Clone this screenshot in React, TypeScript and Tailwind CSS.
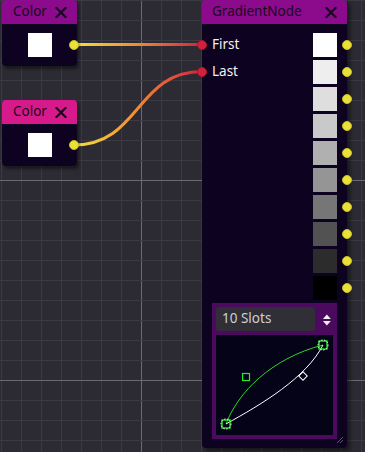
import React from "react";

const SWATCHES = [
  "#ffffff",
  "#eeeeee",
  "#dedede",
  "#c9c9c9",
  "#b0b0b0",
  "#959595",
  "#767676",
  "#525252",
  "#2c2c2c",
  "#000000",
];

const LABELS = ["First", "Last"];

function CloseIcon() {
  return (
    <svg width="12" height="11" viewBox="0 0 12 11" className="shrink-0">
      <path d="M1.5 1 L10.5 10 M10.5 1 L1.5 10" stroke="#16081c" strokeWidth="2.2" strokeLinecap="square" />
    </svg>
  );
}

function Port({ side, color }: { side: "left" | "right" | "inset"; color: "yellow" | "red" }) {
  const pos = side === "left" ? "left-[-5px]" : side === "right" ? "right-[-5px]" : "right-[-2px]";
  const fill = color === "yellow" ? "bg-[#e9e03a] border-[#c9bf22]" : "bg-[#d3203d] border-[#b01530]";
  return <span className={`absolute top-1/2 -translate-y-1/2 ${pos} h-[10px] w-[10px] rounded-full border ${fill}`} />;
}

function Grid() {
  const xs = Array.from({ length: 19 }, (_, i) => 1 + i * 20);
  const ys = Array.from({ length: 23 }, (_, i) => i * 20);
  return (
    <svg className="absolute inset-0" width="365" height="452">
      {xs.map((x) => (
        <line key={`x${x}`} x1={x + 0.5} y1="0" x2={x + 0.5} y2="452" stroke={x === 141 ? "#6b6a71" : "#3b3a43"} strokeWidth="1" />
      ))}
      {ys.map((y) => (
        <line key={`y${y}`} x1="0" y1={y + 0.5} x2="365" y2={y + 0.5} stroke={y === 180 || y === 380 ? "#6b6a71" : "#3b3a43"} strokeWidth="1" />
      ))}
    </svg>
  );
}

function Wires() {
  return (
    <svg className="absolute inset-0" width="365" height="452">
      <defs>
        <linearGradient id="w1" gradientUnits="userSpaceOnUse" x1="74" y1="0" x2="202" y2="0">
          <stop offset="0" stopColor="#f4e33c" />
          <stop offset="0.5" stopColor="#ee8a34" />
          <stop offset="1" stopColor="#d7203e" />
        </linearGradient>
      </defs>
      <path d="M74 44.5 L202 44.5" stroke="url(#w1)" strokeWidth="3" fill="none" />
      <path d="M74 145 C140 145 136 71.5 202 71.5" stroke="url(#w1)" strokeWidth="3" fill="none" />
    </svg>
  );
}

function ColorNode({ top, header }: { top: string; header: string }) {
  return (
    <div className={`absolute left-[2px] ${top} w-[75px] rounded-[4px] shadow-[2px_3px_3px_rgba(0,0,0,0.45)]`}>
      <div className={`flex h-[24px] items-center justify-between rounded-t-[4px] ${header} pl-[11px] pr-[10px] text-[13.5px] text-[#16081c]`}>
        <span>Color</span>
        <CloseIcon />
      </div>
      <div className="relative flex h-[42px] items-center justify-center rounded-b-[4px] bg-[#0d0220]">
        <div className="h-[24px] w-[24px] bg-white" />
        <Port side="inset" color="yellow" />
      </div>
    </div>
  );
}

function CurveEditor() {
  return (
    <svg width="117" height="100" className="block">
      <rect width="117" height="100" fill="#050317" />
      <g transform="translate(-216 -335)">
        <path d="M226 424 C238 392 272 358 323 345" stroke="#22dd22" strokeWidth="1" fill="none" />
        <path d="M226 424 C262 404 306 378 323 345" stroke="#ffffff" strokeWidth="1" fill="none" />
        <rect x="242.5" y="373.5" width="7" height="7" stroke="#22ee22" strokeWidth="1.2" fill="none" />
        <rect x="300" y="373" width="6" height="6" transform="rotate(45 303 376)" stroke="#ffffff" strokeWidth="1" fill="none" />
        <rect x="222" y="420" width="8" height="8" stroke="#22ee22" strokeWidth="1.4" fill="none" />
        <circle cx="226" cy="424" r="5" stroke="#ffffff" strokeWidth="1" strokeDasharray="1.5 1.5" fill="none" />
        <rect x="319" y="341" width="8" height="8" stroke="#22ee22" strokeWidth="1.4" fill="none" />
        <circle cx="323" cy="345" r="5" stroke="#ffffff" strokeWidth="1" strokeDasharray="1.5 1.5" fill="none" />
      </g>
    </svg>
  );
}

function GradientNode() {
  return (
    <div className="absolute left-[202px] top-0 w-[145px] rounded-[4px] shadow-[3px_3px_4px_rgba(0,0,0,0.5)]">
      <div className="flex h-[24px] items-center justify-between rounded-t-[4px] bg-[#8c0b8d] pl-[10px] pr-[10px] text-[13.5px] text-[#16081c]">
        <span>GradientNode</span>
        <CloseIcon />
      </div>
      <div className="relative rounded-b-[4px] bg-[#0d0220] pb-[9px] pt-[7px]">
        {SWATCHES.map((c, i) => (
          <div key={c} className="relative flex h-[27px] items-center justify-between pl-[10px] pr-[10px]">
            <span className="text-[13.5px] text-[#f2f2f2]">{LABELS[i] ?? ""}</span>
            <div className="mt-[1px] h-[24px] w-[24px]" style={{ backgroundColor: c }} />
            {i < 2 && <Port side="left" color="red" />}
            <Port side="right" color="yellow" />
          </div>
        ))}
        <div className="mx-[10px] mt-[2px] bg-[#4b0a5e] p-[4px]">
          <div className="flex h-[24px] items-center gap-[4px]">
            <div className="flex h-[24px] w-[101px] items-center rounded-[3px] bg-[#302f37] pl-[6px] text-[13.5px] text-[#cfcfd2]">
              10 Slots
            </div>
            <svg width="12" height="16" viewBox="0 0 12 16" className="ml-[2px]">
              <path d="M2 8 L6 3.5 L10 8 Z" fill="#f0f0f0" />
              <path d="M2 11 L6 15.5 L10 11 Z" fill="#f0f0f0" transform="translate(0 -1)" />
            </svg>
          </div>
          <div className="mt-[4px]">
            <CurveEditor />
          </div>
        </div>
        <svg width="8" height="8" className="absolute bottom-[4px] right-[3px]">
          <path d="M1 7 L7 1 M4 7 L7 4" stroke="#5a5a60" strokeWidth="1" />
        </svg>
      </div>
    </div>
  );
}

export default function App() {
  return (
    <div className="relative h-[452px] w-[365px] overflow-hidden bg-[#2c2b34] font-['Noto_Sans',sans-serif] leading-none">
      <Grid />
      <Wires />
      <ColorNode top="top-0" header="bg-[#8c0b8d]" />
      <ColorNode top="top-[100px]" header="bg-[#d61a8c]" />
      <GradientNode />
    </div>
  );
}
